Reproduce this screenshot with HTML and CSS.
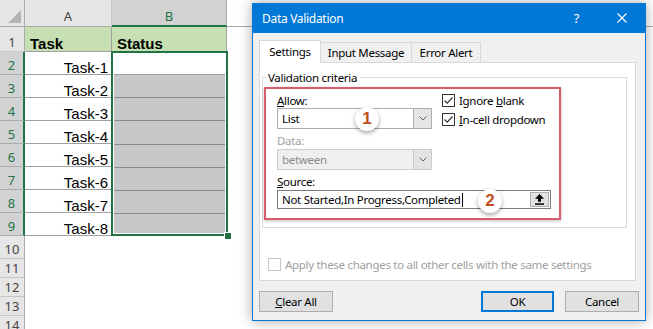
FILE: index.html
```html
<!DOCTYPE html>
<html>
<head>
<meta charset="utf-8">
<link rel="stylesheet" href="styles.css">
</head>
<body>
<div class="sheet">
  <div class="corner"><span class="tri"></span></div>
  <div class="ch">A</div>
  <div class="ch ch-sel">B</div>
  <div class="ch ch-rest"></div>

  <div class="rh">1</div>
  <div class="cell head">Task</div>
  <div class="cell head">Status</div>
  <div class="rest"></div>

  <div class="selection">
    <div class="bcell bw"></div>
    <div class="bcell bg"></div>
    <div class="bcell bg"></div>
    <div class="bcell bg"></div>
    <div class="bcell bg"></div>
    <div class="bcell bg"></div>
    <div class="bcell bg"></div>
    <div class="bcell bg last"></div>
    <span class="handle"></span>
  </div>

  <div class="rh rh-sel">2</div><div class="cell num">Task-1</div><div class="rest"></div>
  <div class="rh rh-sel">3</div><div class="cell num">Task-2</div><div class="rest"></div>
  <div class="rh rh-sel">4</div><div class="cell num">Task-3</div><div class="rest"></div>
  <div class="rh rh-sel">5</div><div class="cell num">Task-4</div><div class="rest"></div>
  <div class="rh rh-sel">6</div><div class="cell num">Task-5</div><div class="rest"></div>
  <div class="rh rh-sel">7</div><div class="cell num">Task-6</div><div class="rest"></div>
  <div class="rh rh-sel">8</div><div class="cell num">Task-7</div><div class="rest"></div>
  <div class="rh rh-sel">9</div><div class="cell num">Task-8</div><div class="rest"></div>

  <div class="rh">10</div><div class="empty"></div>
  <div class="rh">11</div><div class="empty"></div>
  <div class="rh">12</div><div class="empty"></div>
  <div class="rh">13</div><div class="empty"></div>
  <div class="rh">14</div><div class="empty"></div>
</div>

<div class="dialog">
  <div class="titlebar">
    <span class="title">Data Validation</span>
    <span class="help">?</span>
    <svg class="close" width="10" height="10" viewBox="0 0 10 10"><path d="M0.5 0.5 L9.5 9.5 M9.5 0.5 L0.5 9.5" stroke="#fff" stroke-width="1.1" fill="none"/></svg>
  </div>
  <div class="dbody">
    <div class="tabs">
      <div class="tab active">Settings</div>
      <div class="tab t2">Input Message</div>
      <div class="tab t3">Error Alert</div>
    </div>
    <div class="panel">
      <div class="group">
        <div class="legend">Validation criteria</div>
        <div class="redbox">
          <div class="toprow">
            <div class="leftcol">
              <div class="lbl"><u>A</u>llow:</div>
              <div class="combo">
                <span class="cval">List</span>
                <span class="carrow"><svg width="8" height="5" viewBox="0 0 8 5"><path d="M0.5 0.5 L4 4 L7.5 0.5" stroke="#606060" fill="none"/></svg></span>
              </div>
              <div class="lbl dis">Data:</div>
              <div class="combo disabled">
                <span class="cval">between</span>
                <span class="carrow"><svg width="8" height="5" viewBox="0 0 8 5"><path d="M0.5 0.5 L4 4 L7.5 0.5" stroke="#606060" fill="none"/></svg></span>
              </div>
            </div>
            <div class="checks">
              <div class="chk"><span class="box"><svg width="11" height="11" viewBox="0 0 11 11"><path d="M1.5 5.5 L4.2 8.2 L9.5 2.5" stroke="#333" stroke-width="1.2" fill="none"/></svg></span><span>Ignore <u>b</u>lank</span></div>
              <div class="chk"><span class="box"><svg width="11" height="11" viewBox="0 0 11 11"><path d="M1.5 5.5 L4.2 8.2 L9.5 2.5" stroke="#333" stroke-width="1.2" fill="none"/></svg></span><span><u>I</u>n-cell dropdown</span></div>
            </div>
          </div>
          <div class="lbl src"><u>S</u>ource:</div>
          <div class="source">
            <span class="sval">Not Started,In Progress,Completed</span><span class="caret"></span>
            <span class="upbtn"><svg width="9" height="11" viewBox="0 0 9 11"><path d="M4.5 0 L9 4.8 L6 4.8 L6 7.8 L3 7.8 L3 4.8 L0 4.8 Z" fill="#000"/><rect x="0" y="9.3" width="9" height="1.5" fill="#000"/></svg></span>
          </div>
          <span class="badge b1">1</span>
          <span class="badge b2">2</span>
        </div>
      </div>
      <div class="apply"><span class="box dbox"></span><span>Apply these changes to all other cells with the same settings</span></div>
    </div>
    <div class="footer">
      <div class="btn"><u>C</u>lear All</div>
      <div class="spacer"></div>
      <div class="btn ok">OK</div>
      <div class="btn">Cancel</div>
    </div>
  </div>
</div>
</body>
</html>
```

FILE: styles.css
```css
html, body {
  margin: 0;
  padding: 0;
  width: 653px;
  height: 329px;
  overflow: hidden;
  background: #fff;
}

/* ---------- spreadsheet ---------- */
.sheet {
  display: grid;
  grid-template-columns: 25px 87px 115px 1fr;
  grid-template-rows: 27px 25px repeat(8, 23px) 23px repeat(4, 19px);
  width: 653px;
  height: 329px;
  overflow: hidden;
  font-family: "Liberation Sans", Arial, sans-serif;
}
.sheet > div { box-sizing: border-box; }

.corner {
  background: #e6e6e6;
  border-right: 1px solid #ababab;
  border-bottom: 1px solid #ababab;
  position: relative;
}
.tri {
  position: absolute;
  right: 3px;
  bottom: 3px;
  width: 0;
  height: 0;
  border-left: 13px solid transparent;
  border-bottom: 13px solid #b4b4b4;
}
.ch {
  background: #e6e6e6;
  border-right: 1px solid #c6c6c6;
  border-bottom: 1px solid #ababab;
  font-family: "Noto Sans", sans-serif;
  font-size: 13px;
  line-height: 14px;
  color: #444;
  display: flex;
  justify-content: center;
  align-items: center;
  padding-top: 6px;
}
.ch-sel {
  background: #d2d2d2;
  color: #217346;
  border-bottom: 2px solid #217346;
  border-right: 1px solid #ababab;
}
.ch-rest { background: #fff; border-right: none; }

.rh {
  background: #e6e6e6;
  border-right: 1px solid #ababab;
  border-bottom: 1px solid #c6c6c6;
  font-family: "Noto Sans", sans-serif;
  font-size: 13px;
  color: #444;
  display: flex;
  justify-content: center;
  align-items: flex-end;
  padding-bottom: 2px;
  line-height: 13px;
}
.rh-sel {
  background: #d2d2d2;
  color: #217346;
  border-right: 2px solid #217346;
  border-bottom: 1px solid #ababab;
}

.cell {
  border-right: 1px solid #a0a0a0;
  border-bottom: 1px solid #a0a0a0;
  font-size: 15px;
  line-height: 13px;
  color: #000;
  display: flex;
  align-items: flex-end;
  padding-bottom: 0;
}
.head {
  background: #c6e0b4;
  font-weight: bold;
  padding-left: 5px;
  padding-bottom: 1px;
}
.num {
  justify-content: flex-end;
  padding-right: 3px;
}
.rest { background: #fff; }
.empty { grid-column: 2 / 5; background: #fff; }

.selection {
  grid-row: 3 / 11;
  grid-column: 3;
  display: flex;
  flex-direction: column;
  position: relative;
}
.selection::after {
  content: "";
  position: absolute;
  left: -1px;
  top: -1px;
  right: -1px;
  bottom: 0;
  border: 2px solid #217346;
  box-shadow: inset 0 0 0 1px #fff;
}
.bcell {
  flex: 1;
  border-bottom: 1px solid #8c8c8c;
}
.bw { background: #fff; border-bottom-color: #a0a0a0; }
.bg { background: #c8c8c8; }
.last { border-bottom: none; }
.handle {
  position: absolute;
  right: -5px;
  bottom: -4px;
  width: 6px;
  height: 6px;
  background: #217346;
  border: 1px solid #fff;
  z-index: 1;
}

/* ---------- dialog ---------- */
.dialog {
  position: absolute;
  left: 252px;
  top: 3px;
  width: 394px;
  height: 318px;
  box-sizing: border-box;
  border: 1px solid #0078d7;
  border-top: none;
  background: #f0f0f0;
  box-shadow: 0 0 12px rgba(0,0,0,0.35);
  font-family: "Noto Sans", sans-serif;
  font-size: 11.5px;
  letter-spacing: -0.3px;
  color: #000;
  display: flex;
  flex-direction: column;
}
.titlebar {
  height: 30px;
  margin: 0 -1px;
  background: #0078d7;
  color: #fff;
  display: flex;
  align-items: center;
  padding-left: 10px;
  padding-right: 19px;
}
.title { flex: 1; font-size: 12px; }
.help { font-size: 13px; margin-right: 38px; }
.close { display: block; }

.dbody {
  padding: 7px 6px 0 6px;
  display: flex;
  flex-direction: column;
}
.tabs {
  display: flex;
  align-items: flex-end;
  height: 22px;
}
.tab {
  box-sizing: border-box;
  height: 20px;
  border: 1px solid #d9d9d9;
  border-bottom: none;
  border-left: none;
  background: #f0f0f0;
  display: flex;
  align-items: center;
  justify-content: center;
}
.tab.active {
  width: 62px;
  height: 23px;
  background: #fff;
  border-left: 1px solid #d9d9d9;
  margin-bottom: -1px;
  position: relative;
  z-index: 1;
  padding-bottom: 1px;
}
.t2 { width: 91px; }
.t3 { width: 69px; }

.panel {
  width: 377px;
  height: 219px;
  box-sizing: border-box;
  background: #fff;
  border: 1px solid #d9d9d9;
  display: flex;
  flex-direction: column;
}
.group {
  margin: 14px 8px 0 2px;
  height: 151px;
  box-sizing: border-box;
  border: 1px solid #dcdcdc;
}
.legend {
  width: fit-content;
  margin: -8px 0 0 4px;
  padding: 0 2px 0 1px;
  background: #fff;
  line-height: 15px;
}
.redbox {
  position: relative;
  margin: 2px 0 0 1px;
  width: 297px;
  height: 133px;
  box-sizing: border-box;
  border: 2px solid #d85d6c;
  box-shadow: 0 1px 3px rgba(0,0,0,0.25);
  padding: 4px 0 0 11px;
  background: #fff;
}
.toprow { display: flex; }
.leftcol { width: 155px; }
.lbl { line-height: 15px; height: 15px; }
.lbl.dis { margin-top: 4px; color: #a0a0a0; }
.lbl.src { margin-top: 4px; }
.combo {
  box-sizing: border-box;
  height: 21px;
  border: 1px solid #adadad;
  background: #fff;
  display: flex;
  align-items: stretch;
}
.combo.disabled {
  margin-top: 1px;
  background: #efefef;
  border-color: #cccccc;
  color: #8c8c8c;
}
.cval { flex: 1; padding-left: 4px; display: flex; align-items: center; }
.carrow {
  width: 17px;
  background: #e5e5e5;
  border-left: 1px solid #adadad;
  display: flex;
  align-items: center;
  justify-content: center;
}
.combo.disabled .carrow { border-left-color: #c8c8c8; background: #e3e3e3; }

.checks { margin-left: 10px; padding-top: 1px; }
.chk { display: flex; align-items: center; height: 13px; margin-bottom: 6px; }
.box {
  box-sizing: border-box;
  width: 13px;
  height: 13px;
  border: 1px solid #333;
  background: #fff;
  margin-right: 4px;
  display: flex;
  align-items: center;
  justify-content: center;
}
.source {
  margin-top: 1px;
  width: 274px;
  height: 19px;
  box-sizing: border-box;
  border: 1px solid #7a7a7a;
  display: flex;
  align-items: center;
  padding-left: 4px;
}
.caret {
  width: 1px;
  height: 14px;
  background: #000;
  margin-left: 1px;
}
.sval { white-space: nowrap; }
.upbtn {
  margin-left: auto;
  margin-right: 1px;
  width: 19px;
  height: 15px;
  box-sizing: border-box;
  background: #e1e1e1;
  border: 1px solid #adadad;
  display: flex;
  align-items: center;
  justify-content: center;
}
.badge {
  position: absolute;
  width: 24px;
  height: 24px;
  border-radius: 50%;
  background: #fff;
  box-shadow: 0 2px 4px rgba(0,0,0,0.35);
  color: #c0501b;
  font-family: "Liberation Sans", Arial, sans-serif;
  font-weight: bold;
  font-size: 17px;
  letter-spacing: 0;
  display: flex;
  align-items: center;
  justify-content: center;
}
.b1 { left: 89px; top: 18px; }
.b2 { left: 212px; top: 100px; }

.apply {
  margin: 30px 0 0 8px;
  display: flex;
  align-items: center;
  color: #a0a0a0;
  height: 13px;
}
.dbox { border-color: #c6c6c6; }

.footer {
  display: flex;
  margin-top: 10px;
}
.spacer { flex: 1; }
.btn {
  box-sizing: border-box;
  width: 74px;
  height: 21px;
  background: #e1e1e1;
  border: 1px solid #adadad;
  display: flex;
  align-items: center;
  justify-content: center;
}
.btn.ok {
  width: 73px;
  border: 2px solid #0078d7;
  margin-right: 11px;
}
```
